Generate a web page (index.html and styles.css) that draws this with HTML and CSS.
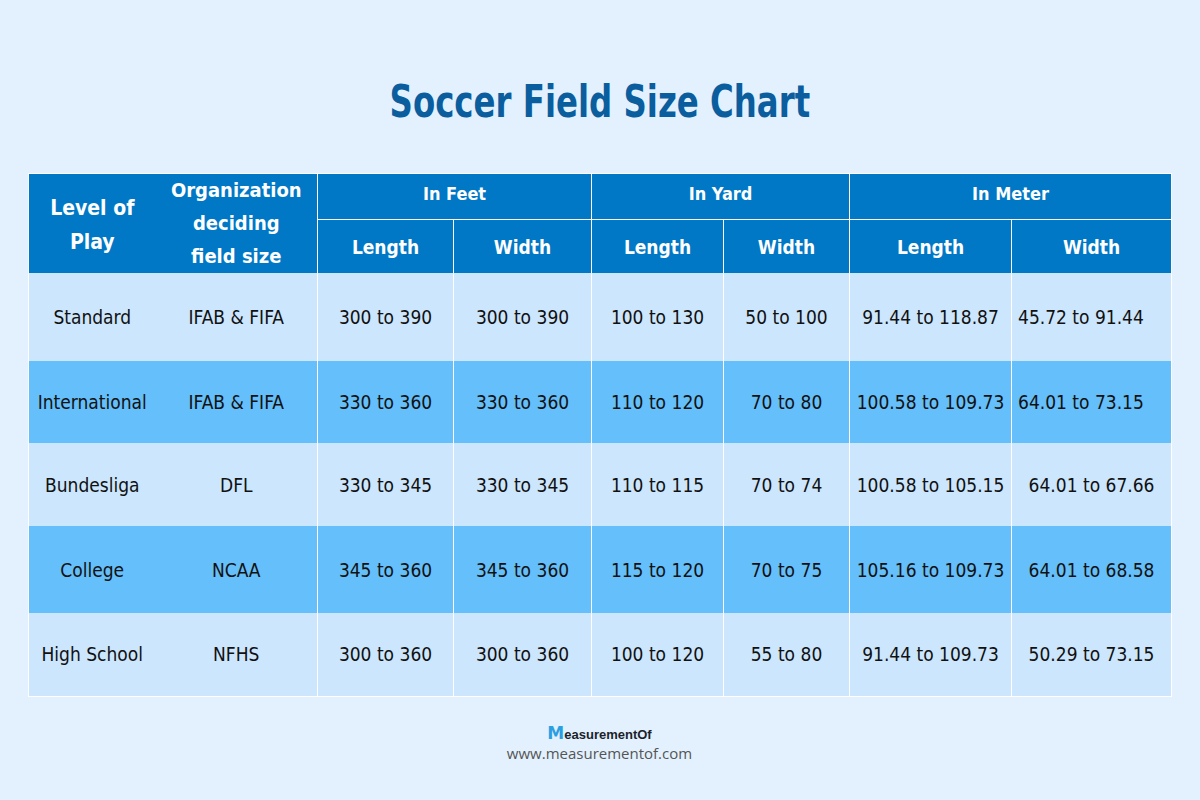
FILE: index.html
```html
<!DOCTYPE html>
<html lang="en">
<head>
<meta charset="utf-8">
<title>Soccer Field Size Chart</title>
<link rel="stylesheet" href="styles.css">
</head>
<body>
<div class="page">
  <h1 class="title"><span class="title-text">Soccer Field Size Chart</span></h1>
  <table class="chart">
    <colgroup>
      <col class="c1"><col class="c2"><col class="c3"><col class="c4"><col class="c5"><col class="c6"><col class="c7"><col class="c8">
    </colgroup>
    <thead>
      <tr class="h1row">
        <th rowspan="2" class="first">Level of<br>Play</th>
        <th rowspan="2" class="second">Organization<br>deciding<br>field size</th>
        <th colspan="2" class="grp">In Feet</th>
        <th colspan="2" class="grp">In Yard</th>
        <th colspan="2" class="grp">In Meter</th>
      </tr>
      <tr class="h2row">
        <th>Length</th><th>Width</th>
        <th>Length</th><th>Width</th>
        <th>Length</th><th>Width</th>
      </tr>
    </thead>
    <tbody>
      <tr class="light r1">
        <td class="first">Standard</td><td class="second">IFAB &amp; FIFA</td>
        <td>300 to 390</td><td>300 to 390</td><td>100 to 130</td><td>50 to 100</td><td>91.44 to 118.87</td><td class="left">45.72 to 91.44</td>
      </tr>
      <tr class="blue r2">
        <td class="first">International</td><td class="second">IFAB &amp; FIFA</td>
        <td>330 to 360</td><td>330 to 360</td><td>110 to 120</td><td>70 to 80</td><td>100.58 to 109.73</td><td class="left">64.01 to 73.15</td>
      </tr>
      <tr class="light r3">
        <td class="first">Bundesliga</td><td class="second">DFL</td>
        <td>330 to 345</td><td>330 to 345</td><td>110 to 115</td><td>70 to 74</td><td>100.58 to 105.15</td><td>64.01 to 67.66</td>
      </tr>
      <tr class="blue r4">
        <td class="first">College</td><td class="second">NCAA</td>
        <td>345 to 360</td><td>345 to 360</td><td>115 to 120</td><td>70 to 75</td><td>105.16 to 109.73</td><td>64.01 to 68.58</td>
      </tr>
      <tr class="light r5">
        <td class="first">High School</td><td class="second">NFHS</td>
        <td>300 to 360</td><td>300 to 360</td><td>100 to 120</td><td>55 to 80</td><td>91.44 to 109.73</td><td>50.29 to 73.15</td>
      </tr>
    </tbody>
  </table>
  <div class="footer">
    <div class="logo"><span class="logo-m">M</span>easurementOf</div>
    <div class="url">www.measurementof.com</div>
  </div>
</div>
</body>
</html>
```
FILE: styles.css
```css
html, body {
  margin: 0;
  padding: 0;
}
body {
  background: #e3f1fe;
  width: 1200px;
  height: 800px;
  overflow: hidden;
}
.page {
  padding: 0 29px 0 28px;
}
.title {
  margin: 74px 0 43px;
  height: 56px;
  line-height: 56px;
  text-align: center;
  font-family: "DejaVu Sans Condensed", "Liberation Sans Narrow", sans-serif;
  font-weight: bold;
  font-size: 45px;
  color: #0a5e9e;
}
.title-text {
  display: inline-block;
  transform: scaleX(0.8);
}
.chart {
  width: 1143px;
  border-collapse: collapse;
  table-layout: fixed;
  border: 1px solid #ffffff;
  font-family: "DejaVu Sans Condensed", "Liberation Sans Narrow", sans-serif;
}
.c1 { width: 127px; }
.c2 { width: 162px; }
.c3 { width: 136px; }
.c4 { width: 138px; }
.c5 { width: 132px; }
.c6 { width: 126px; }
.c7 { width: 162px; }
.c8 { width: 160px; }

.chart th {
  background: #0078c6;
  color: #ffffff;
  font-weight: bold;
  font-size: 19px;
  line-height: 24px;
  padding: 0;
  text-align: center;
  border-left: 1px solid #ffffff;
}
.chart th.first, .chart td.first {
  border-left: none;
}
.chart th.second, .chart td.second {
  border-left: none;
}
.chart th.first {
  font-size: 21px;
  line-height: 34px;
  padding-top: 2px;
}
.chart th.second {
  font-size: 20px;
  line-height: 33px;
}
.h1row { height: 46px; }
.h1row th.grp {
  border-bottom: 1px solid #ffffff;
  font-size: 18px;
  padding-bottom: 6px;
}
.h2row { height: 53px; }

.chart td {
  font-size: 19px;
  color: #111111;
  text-align: center;
  padding: 0;
  border-left: 1px solid #ffffff;
  white-space: nowrap;
}
.chart td.left {
  text-align: left;
  padding-left: 6px;
}
.light td { background: #cce6fd; }
.blue td { background: #64bffa; }
.r1 { height: 88px; }
.r2 { height: 82px; }
.r3 { height: 83px; }
.r4 { height: 87px; }
.r5 { height: 83px; }

.footer {
  margin-top: 27px;
  text-align: center;
}
.logo {
  font-family: "Liberation Sans", Arial, sans-serif;
  font-weight: bold;
  font-size: 13px;
  line-height: 18px;
  color: #1b1f2a;
}
.logo-m {
  font-size: 17px;
  color: #2a9fe2;
  font-family: "DejaVu Sans", sans-serif;
}
.url {
  font-family: "Open Sans", "Liberation Sans", sans-serif;
  font-size: 15px;
  line-height: 18px;
  color: #555555;
}
```
